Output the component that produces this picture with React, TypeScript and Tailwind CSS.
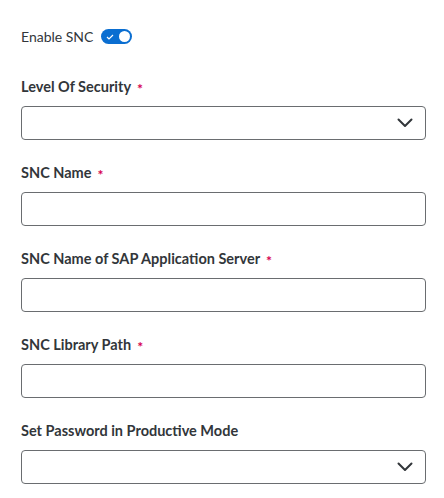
import React from "react";

const Chevron = () => (
  <svg width="16" height="10" viewBox="0 0 16 10" fill="none" className="shrink-0">
    <path d="M1.5 1.5 L8 8 L14.5 1.5" stroke="#32363a" strokeWidth="2" strokeLinecap="round" strokeLinejoin="round" />
  </svg>
);

const Label = ({ text, required }: { text: string; required?: boolean }) => (
  <div className="h-[20px] flex items-center text-[14.5px] font-bold text-[#32363a] leading-[20px]">
    <span>{text}</span>
    {required && <span className="ml-[6px] text-[#d6004f] text-[14px] leading-none relative top-[2px]">*</span>}
  </div>
);

const Field = ({ label, required, select }: { label: string; required?: boolean; select?: boolean }) => (
  <div className="flex flex-col">
    <Label text={label} required={required} />
    <div className="mt-[9px] h-[34px] border border-[#6a6d70] rounded-[4px] bg-white flex items-center justify-end pr-[12px]">
      {select && <Chevron />}
    </div>
  </div>
);

export default function App() {
  return (
    <div className="w-[444px] h-[498px] bg-white pl-[21px] pr-[18px] pt-[26px] overflow-hidden" style={{ fontFamily: "Lato, 'Open Sans', sans-serif" }}>
      <div className="h-[20px] flex items-center text-[14px] text-[#32363a]">
        <span>Enable SNC</span>
        <div className="ml-[8px] w-[31px] h-[15px] rounded-full bg-[#0a6ed1] relative flex items-center">
          <svg width="8" height="6" viewBox="0 0 8 6" className="absolute left-[5px] top-[5px]">
            <path d="M1 3 L3 5 L7 1" stroke="white" strokeWidth="1.2" fill="none" />
          </svg>
          <div className="absolute right-[2px] top-[2px] w-[11px] h-[11px] rounded-full bg-white" />
        </div>
      </div>
      <div className="mt-[31px] flex flex-col gap-[23px]">
        <Field label="Level Of Security" required select />
        <Field label="SNC Name" required />
        <Field label="SNC Name of SAP Application Server" required />
        <Field label="SNC Library Path" required />
        <Field label="Set Password in Productive Mode" select />
      </div>
    </div>
  );
}
